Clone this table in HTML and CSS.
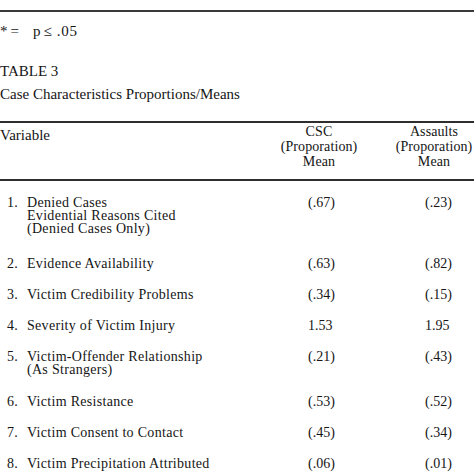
FILE: index.html
```html
<!DOCTYPE html>
<html>
<head>
<meta charset="utf-8">
<link rel="stylesheet" href="styles.css">
</head>
<body>
<div class="page">
  <div class="top-rule"></div>
  <p class="note"><span>*</span><span class="eq">=</span><span class="p">p</span><span class="le">≤</span><span class="val">.05</span></p>
  <p class="title">TABLE 3</p>
  <p class="subtitle">Case Characteristics Proportions/Means</p>
  <div class="table">
    <div class="head">
      <div class="h-var">Variable</div>
      <div class="h-col">CSC<br>(Proporation)<br>Mean</div>
      <div class="h-col">Assaults<br>(Proporation)<br>Mean</div>
    </div>
    <div class="body">
      <div class="row r1">
        <div class="var"><span class="num">1.</span><span class="txt">Denied Cases<br>Evidential Reasons Cited<br>(Denied Cases Only)</span></div>
        <div class="v1">(.67)</div>
        <div class="v2">(.23)</div>
      </div>
      <div class="row">
        <div class="var"><span class="num">2.</span><span class="txt">Evidence Availability</span></div>
        <div class="v1">(.63)</div>
        <div class="v2">(.82)</div>
      </div>
      <div class="row">
        <div class="var"><span class="num">3.</span><span class="txt">Victim Credibility Problems</span></div>
        <div class="v1">(.34)</div>
        <div class="v2">(.15)</div>
      </div>
      <div class="row">
        <div class="var"><span class="num">4.</span><span class="txt">Severity of Victim Injury</span></div>
        <div class="v1">1.53</div>
        <div class="v2">1.95</div>
      </div>
      <div class="row r5">
        <div class="var"><span class="num">5.</span><span class="txt">Victim-Offender Relationship<br>(As Strangers)</span></div>
        <div class="v1">(.21)</div>
        <div class="v2">(.43)</div>
      </div>
      <div class="row">
        <div class="var"><span class="num">6.</span><span class="txt">Victim Resistance</span></div>
        <div class="v1">(.53)</div>
        <div class="v2">(.52)</div>
      </div>
      <div class="row">
        <div class="var"><span class="num">7.</span><span class="txt">Victim Consent to Contact</span></div>
        <div class="v1">(.45)</div>
        <div class="v2">(.34)</div>
      </div>
      <div class="row">
        <div class="var"><span class="num">8.</span><span class="txt">Victim Precipitation Attributed</span></div>
        <div class="v1">(.06)</div>
        <div class="v2">(.01)</div>
      </div>
    </div>
  </div>
</div>
</body>
</html>
```

FILE: styles.css
```css
html, body {
  margin: 0;
  padding: 0;
  overflow: hidden;
  background: #ffffff;
}
body {
  width: 474px;
  height: 474px;
  font-family: "Liberation Serif", "Times New Roman", serif;
  color: #151515;
}
.page {
  width: 520px;
}
.top-rule {
  margin-top: 10px;
  width: 474px;
  border-top: 2px solid #3a3a3a;
}
.note {
  margin: 10px 0 0 0;
  font-size: 15px;
  line-height: 18px;
  display: flex;
}
.note .eq { margin-left: 3px; }
.note .p { margin-left: 14px; }
.note .le { margin-left: 3px; }
.note .val { margin-left: 5px; letter-spacing: 0.8px; }
.title {
  margin: 22px 0 0 0;
  font-size: 15px;
  line-height: 18px;
}
.subtitle {
  margin: 5px 0 0 0;
  font-size: 15px;
  line-height: 18px;
}
.table {
  margin-top: 18px;
}
.head {
  display: grid;
  grid-template-columns: 270px 98px 132px;
  border-top: 2px solid #2e2e2e;
  border-bottom: 2px solid #2e2e2e;
  width: 474px;
  height: 56px;
}
.h-var {
  font-size: 15px;
  line-height: 15px;
  padding-top: 5px;
}
.h-col {
  font-size: 14px;
  line-height: 15px;
  text-align: center;
  padding-top: 1px;
  letter-spacing: 0.1px;
}
.body {
  padding-top: 15px;
}
.row {
  display: grid;
  grid-template-columns: 270px 98px 132px;
  font-size: 14px;
  line-height: 13px;
  padding-bottom: 18px;
}
.row.r1 { padding-bottom: 22px; }
.row.r5 { padding-bottom: 19px; }
.var {
  display: flex;
  padding-left: 7px;
  letter-spacing: 0.3px;
}
.num {
  width: 20px;
  flex: none;
}
.txt {
  white-space: nowrap;
}
.v1 {
  padding-left: 38px;
}
.v2 {
  padding-left: 57px;
}
```
